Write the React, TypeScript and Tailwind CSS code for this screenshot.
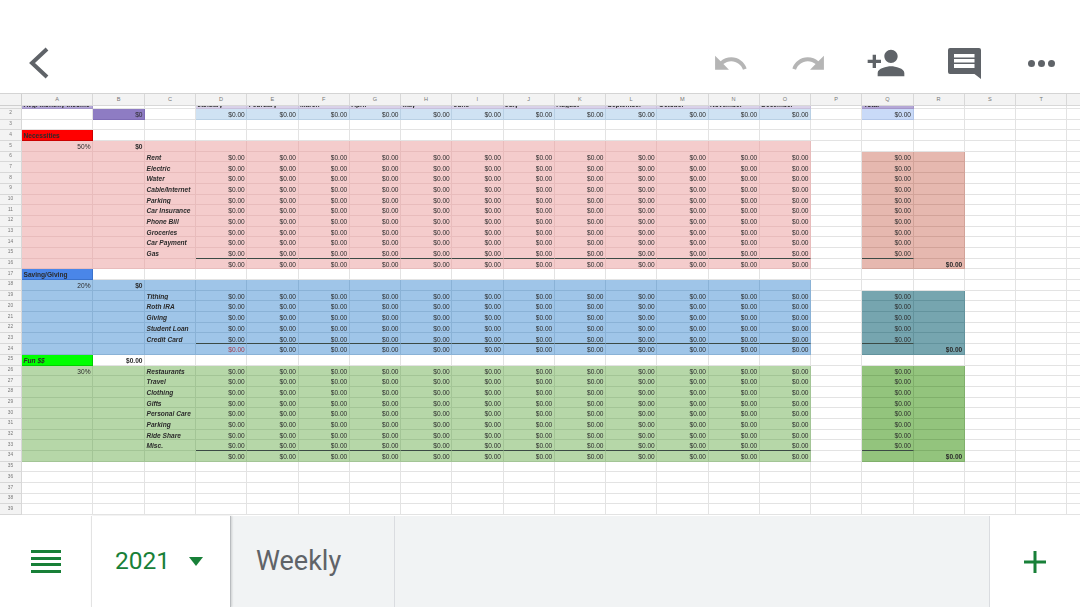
import { Fragment } from "react";

const columns = "ABCDEFGHIJKLMNOPQRSTU".split("");
const months = ["January", "February", "March", "April", "May", "June", "July", "August", "September", "October", "November", "December"];
const rows = Array.from({ length: 39 }, (_, i) => i + 1);

const labels: Record<number, string> = {
  6: "Rent", 7: "Electric", 8: "Water", 9: "Cable/Internet", 10: "Parking", 11: "Car Insurance",
  12: "Phone Bill", 13: "Groceries", 14: "Car Payment", 15: "Gas",
  19: "Tithing", 20: "Roth IRA", 21: "Giving", 22: "Student Loan", 23: "Credit Card",
  26: "Restaurants", 27: "Travel", 28: "Clothing", 29: "Gifts", 30: "Personal Care", 31: "Parking", 32: "Ride Share", 33: "Misc.",
};

type Cell = { text?: string; fill: string; align?: string; font?: string };

const WHITE = "bg-white border-[#e3e3e3]";
const PINK = "bg-[#f4cccc] border-[#e8bcbc]";
const BLUE = "bg-[#9fc5e8] border-[#8ab2d6]";
const GREEN = "bg-[#b6d7a8] border-[#a3c596]";
const PINK_DARK = "bg-[#e6b8af] border-[#d2a399]";
const BLUE_DARK = "bg-[#76a5af] border-[#63939d]";
const GREEN_DARK = "bg-[#93c47d] border-[#80b06b]";

function section(row: number) {
  if (row >= 5 && row <= 16) return PINK;
  if (row >= 18 && row <= 24) return BLUE;
  if (row >= 26 && row <= 34) return GREEN;
  return null;
}

function sideSection(row: number) {
  if (row >= 6 && row <= 16) return PINK_DARK;
  if (row >= 19 && row <= 24) return BLUE_DARK;
  if (row >= 26 && row <= 34) return GREEN_DARK;
  return null;
}

function hasMoney(row: number) {
  return (row >= 6 && row <= 16) || (row >= 19 && row <= 24) || (row >= 26 && row <= 34);
}

function getCell(row: number, col: number): Cell {
  const money = "$0.00";
  if (row === 1) {
    if (col === 0) return { text: "Avg. Monthly Income", fill: "bg-[#b4a7d6] border-[#a496c9]", font: "font-bold" };
    if (col >= 3 && col <= 14) return { text: months[col - 3], fill: "bg-[#d9d2e9] border-[#c8c0dc]", font: "font-bold" };
    if (col === 16) return { text: "Total", fill: "bg-[#b4a7d6] border-[#a496c9]", font: "font-bold" };
    return { fill: WHITE };
  }
  if (row === 2) {
    if (col === 1) return { text: "$0", fill: "bg-[#8e7cc3] border-[#7f6db5]", align: "justify-end" };
    if (col >= 3 && col <= 14) return { text: money, fill: "bg-[#cfe2f3] border-[#b9d0e4]", align: "justify-end" };
    if (col === 16) return { text: money, fill: "bg-[#c9daf8] border-[#b3c6e8]", align: "justify-end" };
    return { fill: WHITE };
  }
  if (col === 0 && row === 4) return { text: "Necessities", fill: "bg-[#ff0000] border-[#cc0000]", font: "font-bold" };
  if (col === 0 && row === 17) return { text: "Saving/Giving", fill: "bg-[#4a86e8] border-[#3a72cc]", font: "font-bold" };
  if (col === 0 && row === 25) return { text: "Fun $$", fill: "bg-[#00ff00] border-[#00d000]", font: "font-bold italic" };
  if (col === 1 && row === 25) return { text: money, fill: WHITE, align: "justify-end", font: "font-bold" };

  const main = section(row);
  if (col <= 14 && main) {
    if (col === 0) {
      const pct = row === 5 ? "50%" : row === 18 ? "20%" : row === 26 ? "30%" : undefined;
      return { text: pct, fill: main, align: "justify-end" };
    }
    if (col === 1) return { text: row === 5 || row === 18 ? "$0" : undefined, fill: main, align: "justify-end", font: "font-bold" };
    if (col === 2) return { text: labels[row], fill: main, font: "font-bold italic" };
    return { text: hasMoney(row) ? money : undefined, fill: main, align: "justify-end" };
  }
  const side = sideSection(row);
  if (side && col === 16) return { text: [16, 24, 34].includes(row) ? undefined : money, fill: side, align: "justify-end" };
  if (side && col === 17) return { text: [16, 24, 34].includes(row) ? money : undefined, fill: side, align: "justify-end", font: "font-bold" };
  return { fill: WHITE };
}

function Sheet() {
  return (
    <div className="grid h-[423px] grid-cols-[22px_71px_52px_51px_repeat(18,51.25px)] grid-rows-[12px_3px_repeat(38,10.7px)] overflow-hidden border-t border-[#d4d4d4] text-[6.6px] leading-none text-[#2b2b2b] blur-[0.4px] [font-family:'Liberation_Sans',sans-serif]">
      <div className="border-r border-b border-[#cfcfcf] bg-[#f3f3f3]" />
      {columns.map((c) => (
        <div key={c} className="flex items-center justify-center border-r border-b border-[#d8d8d8] bg-[#f3f3f3] text-[5.6px] text-[#777777]">
          {c === "U" ? "" : c}
        </div>
      ))}
      {rows.map((row) => (
        <Fragment key={row}>
          <div className="flex items-center justify-center overflow-hidden border-r border-b border-[#d8d8d8] bg-[#f3f3f3] text-[4.8px] text-[#777777]">
            {row === 1 ? "" : row}
          </div>
          {columns.map((_, col) => {
            const cell = getCell(row, col);
            const totalLine = [15, 23, 33].includes(row) && ((col >= 3 && col <= 14) || col === 16);
            const selected = row === 9 && col === 16;
            const red = row === 24 && col === 3;
            return (
              <div
                key={col}
                className={`flex overflow-hidden whitespace-nowrap border-r border-b px-[1.5px] ${row === 1 ? "items-start" : "items-end"} ${cell.fill} ${cell.align ?? "justify-start"} ${cell.font ?? ""} ${totalLine ? "border-b-[#3b4a45]" : ""} ${selected ? "border-[#a3a67d]" : ""} ${red ? "text-[#a13a4a]" : ""}`}
              >
                <span className={row === 1 ? "-mt-[4px]" : ""}>{cell.text}</span>
              </div>
            );
          })}
        </Fragment>
      ))}
    </div>
  );
}

function TopBar() {
  return (
    <div className="flex h-[93px] items-center bg-white pt-[33px]">
      <svg viewBox="0 0 24 36" className="ml-[28px] h-[36px] w-[24px]" fill="none" stroke="#5f6368" strokeWidth="4">
        <path d="M19 4 L4 18 L19 32" />
      </svg>
      <div className="ml-auto flex items-center">
        <div className="flex w-[78px] justify-center">
          <svg viewBox="0 0 24 24" className="size-[37px]" fill="#b5b5b5">
            <path d="M12.5 8c-2.65 0-5.05.99-6.9 2.6L2 7v9h9l-3.62-3.62c1.39-1.16 3.16-1.88 5.12-1.88 3.54 0 6.55 2.31 7.6 5.5l2.37-.78C21.08 11.03 17.15 8 12.5 8z" />
          </svg>
        </div>
        <div className="flex w-[78px] justify-center">
          <svg viewBox="0 0 24 24" className="size-[37px]" fill="#b5b5b5">
            <path d="M18.4 10.6C16.55 8.99 14.15 8 11.5 8c-4.65 0-8.58 3.03-9.96 7.22L3.9 16c1.05-3.19 4.05-5.5 7.6-5.5 1.95 0 3.73.72 5.12 1.88L13 16h9V7l-3.6 3.6z" />
          </svg>
        </div>
        <div className="flex w-[78px] justify-center">
          <svg viewBox="0 0 24 24" className="size-[40px]" fill="#5f6368">
            <path d="M15 12c2.21 0 4-1.79 4-4s-1.79-4-4-4-4 1.79-4 4 1.79 4 4 4zm-9-2V7H4v3H1v2h3v3h2v-3h3v-2H6zm9 4c-2.67 0-8 1.34-8 4v2h16v-2c0-2.66-5.33-4-8-4z" />
          </svg>
        </div>
        <div className="flex w-[78px] justify-center">
          <svg viewBox="0 0 33 31" className="h-[31px] w-[33px]">
            <path fill="#5f6368" d="M2 0H31a2 2 0 0 1 2 2V31L26.5 26H2a2 2 0 0 1-2-2V2a2 2 0 0 1 2-2z" />
            <path fill="#ffffff" d="M6 6H26.5V9.5H6zM6 11H26.5V14.5H6zM6 16H26.5V20H6z" />
          </svg>
        </div>
        <div className="flex w-[77px] justify-center gap-[3px]">
          <span className="size-[7px] rounded-full bg-[#5f6368]" />
          <span className="size-[7px] rounded-full bg-[#5f6368]" />
          <span className="size-[7px] rounded-full bg-[#5f6368]" />
        </div>
      </div>
    </div>
  );
}

function BottomBar() {
  return (
    <div className="flex h-[91px] bg-[#f1f3f4] [font-family:Roboto,sans-serif]">
      <div className="flex w-[91px] flex-col items-center justify-center gap-[3.5px] bg-white">
        <span className="h-[3px] w-[30px] bg-[#188038]" />
        <span className="h-[3px] w-[30px] bg-[#188038]" />
        <span className="h-[3px] w-[30px] bg-[#188038]" />
        <span className="h-[3px] w-[30px] bg-[#188038]" />
      </div>
      <div className="flex w-[140px] items-center border-r border-l border-r-[#b9bcbf] border-l-[#e3e3e3] bg-white pl-[23px] shadow-[1px_0_2px_rgba(0,0,0,0.15)]">
        <span className="text-[24.5px] text-[#188038]">2021</span>
        <span className="ml-[19px] size-0 border-x-[7px] border-t-[9px] border-x-transparent border-t-[#188038]" />
      </div>
      <div className="flex w-[164px] items-center border-r border-[#dadce0] pl-[25px] text-[27px] text-[#5f6368]">Weekly</div>
      <div className="flex-1" />
      <div className="flex w-[91px] items-center justify-center border-l border-[#dadce0] bg-white">
        <svg viewBox="0 0 22 22" className="size-[22px]" fill="#188038">
          <path d="M9.5 0h3v9.5H22v3h-9.5V22h-3v-9.5H0v-3h9.5z" />
        </svg>
      </div>
    </div>
  );
}

export default function App() {
  return (
    <div className="flex h-[607px] w-[1080px] flex-col overflow-hidden bg-white">
      <TopBar />
      <Sheet />
      <BottomBar />
    </div>
  );
}
